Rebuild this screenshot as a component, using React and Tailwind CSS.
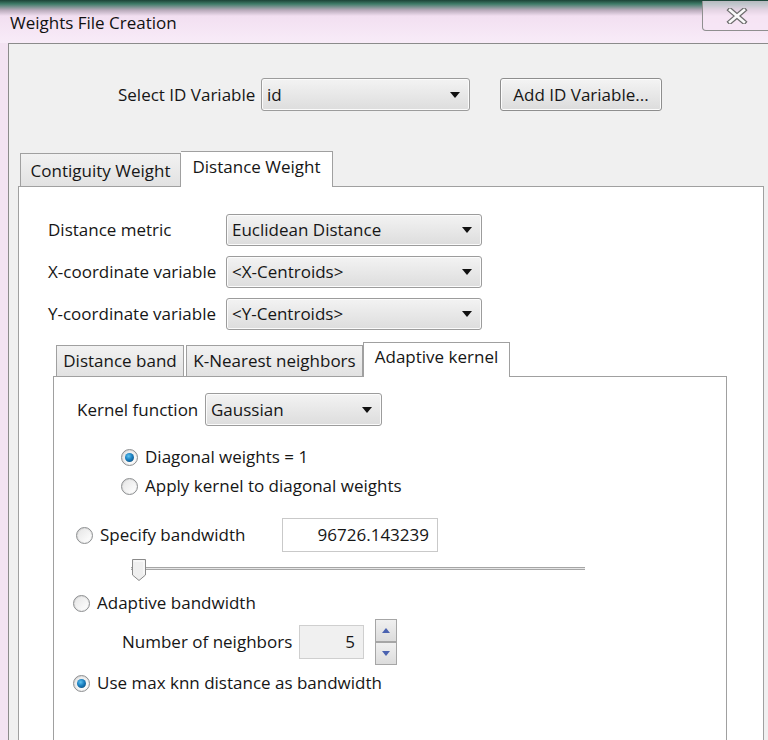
import React from "react";

const font = "font-['Open_Sans',sans-serif]";

function Arrow() {
  return (
    <svg width="10" height="6" viewBox="0 0 10 6">
      <path d="M0 0 L10 0 L5 6 Z" fill="#111" />
    </svg>
  );
}

function Combo({ value, className = "" }) {
  return (
    <div
      className={`flex items-center justify-between rounded-[3px] border border-[#9c9c9c] bg-linear-to-b from-[#f3f3f3] to-[#dddddd] pl-[5px] pr-[9px] shadow-[inset_0_0_0_1px_#fbfbfb] ${className}`}
    >
      <span>{value}</span>
      <Arrow />
    </div>
  );
}

function Radio({ checked }) {
  return (
    <div className="flex h-[17px] w-[17px] shrink-0 items-center justify-center rounded-full border border-[#8c8e90] bg-linear-to-br from-[#d4d4d4] to-[#fafafa]">
      <div className="flex h-[13px] w-[13px] items-center justify-center rounded-full bg-linear-to-br from-[#e6e6e6] to-[#ffffff]">
        {checked && (
          <div className="h-[9px] w-[9px] rounded-full bg-[radial-gradient(circle_at_40%_35%,#5fc3f0_0%,#1a7fc0_45%,#0b3f66_100%)]" />
        )}
      </div>
    </div>
  );
}

function RadioRow({ checked, label, className = "" }) {
  return (
    <div className={`flex h-[22px] items-center ${className}`}>
      <Radio checked={checked} />
      <span className="ml-[7px]">{label}</span>
    </div>
  );
}

function SpinBtn({ up }) {
  return (
    <div className="flex h-[23px] w-[22px] items-center justify-center border border-[#a6a6a6] bg-linear-to-b from-[#f0f0f0] to-[#dcdcdc]">
      <svg width="8" height="5" viewBox="0 0 8 5">
        {up ? <path d="M0 5 L8 5 L4 0 Z" fill="#4a62b0" /> : <path d="M0 0 L8 0 L4 5 Z" fill="#4a62b0" />}
      </svg>
    </div>
  );
}

export default function App() {
  return (
    <div className={`relative h-[740px] w-[768px] overflow-hidden bg-[#f3e3f2] text-[17px] leading-[24px] text-[#161616] ${font}`}>
      {/* TITLE BAR */}
      <div className="flex h-[43px] items-start bg-[linear-gradient(to_bottom,#1b4236_0px,#3f7c69_4px,#b7a9b9_10px,#f2dff1_16px,#f8ecf8_43px)]">
        <span className="mt-[11px] pl-[10px] text-[17px] leading-[24px] text-[#111]">Weights File Creation</span>
        <div className="ml-auto mr-[-4px] mt-[1px] flex h-[30px] w-[70px] items-center justify-center rounded-b-[4px] border border-[#8f8f8f] border-t-0 bg-[#f6e6f5]/70">
          <svg width="22" height="16" viewBox="0 0 22 16">
            <path d="M4 2 L18 14 M18 2 L4 14" stroke="#6d6d6d" strokeWidth="5" strokeLinecap="square" />
            <path d="M4 2 L18 14 M18 2 L4 14" stroke="#fafafa" strokeWidth="2.6" strokeLinecap="square" />
          </svg>
        </div>
      </div>

      {/* BODY */}
      <div className="ml-[8px] h-[697px] border-l border-t border-[#8b8b8b] bg-[#f0f0f0]">
        {/* ID row */}
        <div className="flex items-center pl-[109px] pt-[34px]">
          <span className="w-[143px] whitespace-nowrap">Select ID Variable</span>
          <Combo value="id" className="h-[33px] w-[209px]" />
          <div className="ml-[30px] flex h-[33px] w-[162px] items-center justify-center rounded-[3px] border border-[#8e8e8e] bg-linear-to-b from-[#f4f4f4] to-[#dcdcdc] shadow-[inset_0_0_0_1px_#fcfcfc]">
            Add ID Variable...
          </div>
        </div>

        {/* Outer tabs */}
        <div className="ml-[9px] mt-[40px]">
          <div className="relative z-10 ml-[2px] flex items-end">
            <div className="flex h-[33px] w-[161px] items-center justify-center border border-b-0 border-[#a0a0a0] bg-linear-to-b from-[#f2f2f2] to-[#e2e2e2] pt-[2px]">
              Contiguity Weight
            </div>
            <div className="-mb-px flex h-[36px] w-[152px] items-start justify-center border border-b-0 border-l-0 border-[#a0a0a0] bg-white pt-[3px]">
              Distance Weight
            </div>
          </div>

          <div className="h-[560px] w-[746px] border border-[#a0a0a0] bg-white pl-[29px] pt-[27px]">
            {[
              ["Distance metric", "Euclidean Distance"],
              ["X-coordinate variable", "<X-Centroids>"],
              ["Y-coordinate variable", "<Y-Centroids>"],
            ].map(([label, value], i) => (
              <div key={label} className={`flex items-center ${i > 0 ? "mt-[10px]" : ""}`}>
                <span className="w-[178px] whitespace-nowrap">{label}</span>
                <Combo value={value} className="h-[32px] w-[256px]" />
              </div>
            ))}

            {/* Inner tabs */}
            <div className="ml-[5px] mt-[12px]">
              <div className="relative z-10 ml-[3px] flex items-end">
                <div className="flex h-[31px] w-[128px] items-center justify-center border border-b-0 border-[#a0a0a0] bg-linear-to-b from-[#f2f2f2] to-[#e2e2e2]">
                  Distance band
                </div>
                <div className="ml-[2px] flex h-[31px] w-[177px] items-center justify-center whitespace-nowrap border border-b-0 border-[#a0a0a0] bg-linear-to-b from-[#f2f2f2] to-[#e2e2e2]">
                  K-Nearest neighbors
                </div>
                <div className="-mb-px flex h-[35px] w-[147px] items-start justify-center border border-b-0 border-[#a0a0a0] bg-white pt-[2px]">
                  Adaptive kernel
                </div>
              </div>

              <div className="h-[380px] w-[674px] border border-[#a0a0a0] bg-white pt-[16px]">
                <div className="flex items-center pl-[23px]">
                  <span className="w-[128px] whitespace-nowrap">Kernel function</span>
                  <Combo value="Gaussian" className="h-[33px] w-[177px]" />
                </div>

                <RadioRow checked label="Diagonal weights = 1" className="ml-[67px] mt-[20px]" />
                <RadioRow label="Apply kernel to diagonal weights" className="ml-[67px] mt-[7px]" />

                <div className="ml-[22px] mt-[21px] flex items-center">
                  <div className="w-[206px]">
                    <RadioRow label="Specify bandwidth" />
                  </div>
                  <div className="flex h-[34px] w-[156px] items-center justify-end border border-[#c9c9c9] bg-white pr-[8px]">
                    96726.143239
                  </div>
                </div>

                {/* Slider */}
                <div className="relative ml-[77px] mt-[6px] h-[24px] w-[454px]">
                  <div className="absolute left-0 right-0 top-[9px] h-[3px] border-y border-[#a6a6a6] bg-[#e6e6e6]" />
                  <svg className="absolute left-0 top-0" width="16" height="24" viewBox="0 0 16 24">
                    <path d="M1.5 1.5 H14.5 V17 L8 22.5 L1.5 17 Z" fill="#efefef" stroke="#8a8a8a" strokeWidth="1" />
                    <path d="M3 3 H13 V16" fill="none" stroke="#ffffff" strokeWidth="1" />
                  </svg>
                </div>

                <RadioRow label="Adaptive bandwidth" className="ml-[19px] mt-[10px]" />

                <div className="ml-[68px] mt-[4px] flex h-[48px] items-center">
                  <span className="w-[177px] whitespace-nowrap">Number of neighbors</span>
                  <div className="flex h-[34px] w-[65px] items-center justify-end border border-[#cfcfcf] bg-[#f0f0f0] pr-[8px]">
                    5
                  </div>
                  <div className="ml-[11px] flex flex-col">
                    <SpinBtn up />
                    <SpinBtn />
                  </div>
                </div>

                <RadioRow checked label="Use max knn distance as bandwidth" className="ml-[19px] mt-[6px]" />
              </div>
            </div>
          </div>
        </div>
      </div>
    </div>
  );
}
